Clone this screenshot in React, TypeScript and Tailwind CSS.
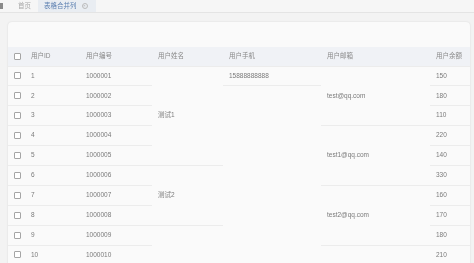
import React from "react";

type Row = {
  id: number;
  code: string;
  balance: number;
};

const rows: Row[] = [
  { id: 1, code: "1000001", balance: 150 },
  { id: 2, code: "1000002", balance: 180 },
  { id: 3, code: "1000003", balance: 110 },
  { id: 4, code: "1000004", balance: 220 },
  { id: 5, code: "1000005", balance: 140 },
  { id: 6, code: "1000006", balance: 330 },
  { id: 7, code: "1000007", balance: 160 },
  { id: 8, code: "1000008", balance: 170 },
  { id: 9, code: "1000009", balance: 180 },
  { id: 10, code: "1000010", balance: 210 },
];

// merged cells: [span, text], keyed by start row index
const nameSpans: Record<number, [number, string]> = {
  0: [5, "测试1"],
  5: [3, "测试2"],
  8: [2, ""],
};
const phoneSpans: Record<number, [number, string]> = {
  0: [1, "15888888888"],
  1: [9, ""],
};
const mailSpans: Record<number, [number, string]> = {
  0: [3, "test@qq.com"],
  3: [3, "test1@qq.com"],
  6: [3, "test2@qq.com"],
  9: [1, ""],
};

const Checkbox = () => (
  <span className="block w-[7px] h-[7px] border border-[#a5a5a5] rounded-[1px] bg-white" />
);

const cell = "px-[6px] border-b border-[#ececec] text-left align-middle font-normal";

const App = () => {
  return (
    <div
      className="w-[474px] h-[263px] overflow-hidden bg-[#f3f3f3] text-[#7a7a7a] text-[6.5px] leading-none antialiased will-change-transform"
      style={{ fontFamily: '"Liberation Sans", "Noto Sans CJK SC", sans-serif' }}
    >
      {/* tab bar */}
      <div className="flex items-stretch h-[13px] bg-[#f6f6f6] border-b border-[#e4e4e4]">
        <div className="w-[4px] flex items-center">
          <span className="block w-[3px] h-[6px] bg-[#8a8a8a]" />
        </div>
        <div className="flex items-center pl-[14px] pr-[5px] text-[#a8a8a8]">首页</div>
        <div className="flex items-center gap-[5px] pl-[6px] pr-[8px] ml-[2px] bg-[#e9edf2] text-[#5b7fb0]">
          <span>表格合并列</span>
          <span className="flex items-center justify-center w-[6px] h-[6px] rounded-full border border-[#bbb] text-[4px] text-[#aaa]">
            ×
          </span>
        </div>
      </div>

      {/* content */}
      <div className="pl-[8px] pr-[4px] pt-[9px]">
        <div className="bg-[#fafafa] rounded-[4px] shadow-[0_0_2px_rgba(0,0,0,0.12)] pt-[25px] h-[260px]">
          <table className="w-full border-collapse table-fixed">
            <colgroup>
              <col className="w-[17px]" />
              <col className="w-[55px]" />
              <col className="w-[72px]" />
              <col className="w-[71px]" />
              <col className="w-[98px]" />
              <col className="w-[109px]" />
              <col />
            </colgroup>
            <thead>
              <tr className="h-[19px] bg-[#f0f2f6] text-[#8a8a8a]">
                <th className={cell}>
                  <Checkbox />
                </th>
                <th className={cell}>用户ID</th>
                <th className={cell}>用户编号</th>
                <th className={cell}>用户姓名</th>
                <th className={cell}>用户手机</th>
                <th className={cell}>用户邮箱</th>
                <th className={cell}>用户余额</th>
              </tr>
            </thead>
            <tbody>
              {rows.map((r, i) => (
                <tr key={r.id} className="h-[19.9px]">
                  <td className={cell}>
                    <Checkbox />
                  </td>
                  <td className={cell}>{r.id}</td>
                  <td className={cell}>{r.code}</td>
                  {nameSpans[i] && (
                    <td rowSpan={nameSpans[i][0]} className={cell}>
                      {nameSpans[i][1]}
                    </td>
                  )}
                  {phoneSpans[i] && (
                    <td rowSpan={phoneSpans[i][0]} className={cell}>
                      {phoneSpans[i][1]}
                    </td>
                  )}
                  {mailSpans[i] && (
                    <td rowSpan={mailSpans[i][0]} className={cell}>
                      {mailSpans[i][1]}
                    </td>
                  )}
                  <td className={cell}>{r.balance}</td>
                </tr>
              ))}
            </tbody>
          </table>
        </div>
      </div>
    </div>
  );
};

export default App;
